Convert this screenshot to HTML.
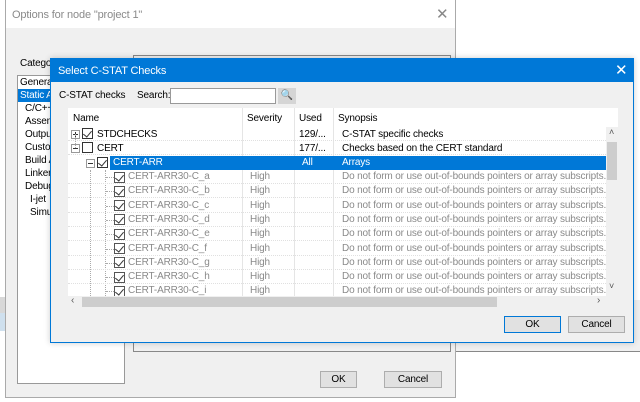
<!DOCTYPE html>
<html><head><meta charset="utf-8"><style>
*{box-sizing:border-box;margin:0;padding:0}
body{width:640px;height:402px;overflow:hidden;background:#fff;font-family:"Liberation Sans",sans-serif;font-size:10px;letter-spacing:-0.15px;color:#000;position:relative}
.a{position:absolute;white-space:nowrap}
.btn{position:absolute;background:#e1e1e1;border:1px solid #adadad;text-align:center;line-height:15px;font-size:10px}
.cb{position:absolute;width:11px;height:11px;border:1px solid #333;background:#fff}
.cb.k::after{content:"";position:absolute;left:2px;top:0px;width:4px;height:7px;border:solid #333;border-width:0 1.5px 1.5px 0;transform:rotate(40deg)}
.ex{position:absolute;width:9px;height:9px;border:1px solid #999;background:#fff}
.ex::before{content:"";position:absolute;left:1px;top:3px;width:5px;height:1px;background:#333}
.ex.p::after{content:"";position:absolute;left:3px;top:1px;width:1px;height:5px;background:#333}
.row{position:absolute;left:68px;width:538px;height:14px;border-bottom:1px dotted #e0e0e0}
.g{color:#8a8a8a}
.clip{position:absolute;left:0;top:0;width:640px;height:402px;clip-path:inset(108px 34px 106px 68px)}
.clipL{position:absolute;left:0;top:0;width:640px;height:402px;clip-path:inset(75px 516px 18px 17px)}
</style></head><body>
<div class="a" style="left:455px;top:300px;width:185px;height:52px;background:#f0f0f0;border-bottom:1px solid #888"></div>
<div class="a" style="left:0;top:297px;width:5px;height:16px;background:#d8d8d8"></div>
<div class="a" style="left:0;top:313px;width:5px;height:18px;background:#cfe0ee"></div>
<!-- outer dialog -->
<div class="a" style="left:5px;top:0;width:451px;height:398px;background:#f0f0f0;border:1px solid #aaa"></div>
<div class="a" style="left:6px;top:0;width:449px;height:28px;background:#fff"></div>
<div class="a" style="left:12px;top:9px;color:#8a8a8a;font-size:11px">Options for node "project 1"</div>
<div class="a" style="left:436px;top:5px;color:#888;font-size:15px">✕</div>
<div class="a" style="left:133px;top:55px;width:318px;height:297px;border:1px solid #888;background:#f0f0f0"></div>
<div class="a" style="left:20px;top:58px">Category</div>
<div class="a" style="left:17px;top:75px;width:108px;height:309px;background:#fff;border:1px solid #999"></div>
<div class="clipL">
<div class="a" style="left:20px;top:77px">General</div>
<div class="a" style="left:18px;top:89px;width:40px;height:13px;background:#0078d7;color:#fff;padding-left:2px;line-height:13px">Static A</div>
<div class="a" style="left:25px;top:103px">C/C++</div>
<div class="a" style="left:25px;top:116px">Assem</div>
<div class="a" style="left:25px;top:129px">Outpu</div>
<div class="a" style="left:25px;top:142px">Custo</div>
<div class="a" style="left:25px;top:155px">Build A</div>
<div class="a" style="left:25px;top:168px">Linker</div>
<div class="a" style="left:25px;top:181px">Debug</div>
<div class="a" style="left:30px;top:194px">I-jet</div>
<div class="a" style="left:30px;top:207px">Simul</div>
</div>
<div class="btn" style="left:320px;top:371px;width:37px;height:17px">OK</div>
<div class="btn" style="left:384px;top:371px;width:58px;height:17px">Cancel</div>
<!-- inner dialog -->
<div class="a" style="left:50px;top:58px;width:584px;height:285px;background:#f0f0f0;border:1px solid #0078d7;box-shadow:0 0 6px rgba(0,0,0,.2)"></div>
<div class="a" style="left:50px;top:58px;width:584px;height:24px;background:#0078d7"></div>
<div class="a" style="left:58px;top:65px;color:#fff;font-size:11px">Select C-STAT Checks</div>
<div class="a" style="left:615px;top:61px;color:#fff;font-size:15px">✕</div>
<div class="a" style="left:59px;top:90px">C-STAT checks</div>
<div class="a" style="left:137px;top:90px">Search:</div>
<div class="a" style="left:170px;top:88px;width:106px;height:16px;background:#fff;border:1px solid #999"></div>
<div class="a" style="left:278px;top:88px;width:18px;height:16px;background:#d5d5d5;color:#666;font-size:10px;text-align:center;line-height:16px">🔍</div>
<div class="a" style="left:68px;top:108px;width:550px;height:200px;background:#fff"></div>
<div class="a" style="left:242px;top:108px;width:1px;height:188px;background:#e5e5e5"></div>
<div class="a" style="left:294px;top:108px;width:1px;height:188px;background:#e5e5e5"></div>
<div class="a" style="left:333px;top:108px;width:1px;height:188px;background:#e5e5e5"></div>
<div class="a" style="left:73px;top:113px">Name</div>
<div class="a" style="left:247px;top:113px">Severity</div>
<div class="a" style="left:299px;top:113px">Used</div>
<div class="a" style="left:338px;top:113px">Synopsis</div>
<div class="clip">
<div class="row" style="top:127px"></div>
<div class="ex p" style="left:71px;top:130px"></div><div class="cb k" style="left:82px;top:128px"></div>
<div class="a" style="left:97px;top:129px">STDCHECKS</div><div class="a" style="left:299px;top:129px">129/...</div><div class="a" style="left:342px;top:129px">C-STAT specific checks</div>
<div class="row" style="top:141px"></div>
<div class="ex" style="left:71px;top:144px"></div><div class="cb" style="left:82px;top:142px"></div>
<div class="a" style="left:97px;top:143px">CERT</div><div class="a" style="left:299px;top:143px">177/...</div><div class="a" style="left:342px;top:143px">Checks based on the CERT standard</div>
<div class="a" style="left:110px;top:156px;width:496px;height:14px;background:#0078d7"></div>
<div class="ex" style="left:86px;top:159px"></div><div class="cb k" style="left:97px;top:157px"></div>
<div class="a" style="left:113px;top:157px;color:#fff">CERT-ARR</div><div class="a" style="left:302px;top:157px;color:#fff">All</div><div class="a" style="left:342px;top:157px;color:#fff">Arrays</div>
<div class="a" style="left:75px;top:134px;height:14px;border-left:1px dotted #aaa"></div>
<div class="a" style="left:90px;top:170px;height:126px;border-left:1px dotted #aaa"></div>
<div class="a" style="left:105px;top:170px;height:126px;border-left:1px dotted #aaa"></div>
<div id="kids"></div>
</div>
<script>
var s="",L="abcdefghi";
for(var i=0;i<9;i++){var t=170+i*14.3;
s+='<div class="row" style="top:'+t+'px"></div>'+
'<div class="a" style="left:106px;top:'+(t+7)+'px;width:8px;border-top:1px dotted #aaa"></div>'+
'<div class="cb k" style="left:114px;top:'+(t+1.5)+'px;border-color:#555"></div>'+
'<div class="a g" style="left:128px;top:'+(t+1)+'px">CERT-ARR30-C_'+L[i]+'</div>'+
'<div class="a g" style="left:250px;top:'+(t+1)+'px">High</div>'+
'<div class="a g" style="left:342px;top:'+(t+1)+'px">Do not form or use out-of-bounds pointers or array subscripts.</div>';}
document.getElementById("kids").outerHTML=s;
</script>
<div class="a" style="left:68px;top:296px;width:550px;height:12px;background:#f0f0f0"></div>
<div class="a" style="left:82px;top:297px;width:415px;height:10px;background:#cdcdcd"></div>
<div class="a" style="left:71px;top:295px;color:#555;font-size:10px">‹</div>
<div class="a" style="left:597px;top:295px;color:#555;font-size:10px">›</div>
<div class="a" style="left:606px;top:127px;width:12px;height:169px;background:#f0f0f0"></div>
<div class="a" style="left:607px;top:142px;width:10px;height:38px;background:#cdcdcd"></div>
<div class="a" style="left:609px;top:127px;color:#555;font-size:9px">˄</div>
<div class="a" style="left:609px;top:281px;color:#555;font-size:9px">˅</div>
<div class="btn" style="left:504px;top:316px;width:57px;height:17px;border:1px solid #0078d7">OK</div>
<div class="btn" style="left:568px;top:316px;width:57px;height:17px">Cancel</div>
</body></html>
